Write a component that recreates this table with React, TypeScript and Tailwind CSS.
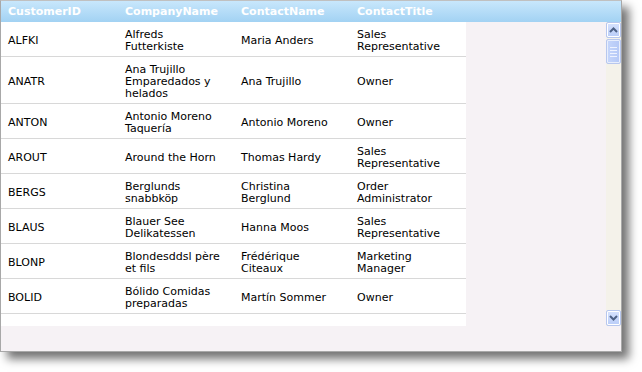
import React from "react";

const rows: [string, string, string, string][] = [
  ["ALFKI", "Alfreds Futterkiste", "Maria Anders", "Sales Representative"],
  ["ANATR", "Ana Trujillo Emparedados y helados", "Ana Trujillo", "Owner"],
  ["ANTON", "Antonio Moreno Taquería", "Antonio Moreno", "Owner"],
  ["AROUT", "Around the Horn", "Thomas Hardy", "Sales Representative"],
  ["BERGS", "Berglunds snabbköp", "Christina Berglund", "Order Administrator"],
  ["BLAUS", "Blauer See Delikatessen", "Hanna Moos", "Sales Representative"],
  ["BLONP", "Blondesddsl père et fils", "Frédérique Citeaux", "Marketing Manager"],
  ["BOLID", "Bólido Comidas preparadas", "Martín Sommer", "Owner"],
];

const headers = ["CustomerID", "CompanyName", "ContactName", "ContactTitle"];

function Chevron({ up }: { up: boolean }) {
  return (
    <svg width="9" height="6" viewBox="0 0 9 6">
      <path
        d={up ? "M1 5 L4.5 1.5 L8 5" : "M1 1 L4.5 4.5 L8 1"}
        fill="none"
        stroke="#4d6185"
        strokeWidth="2"
      />
    </svg>
  );
}

function ScrollBtn({ up }: { up: boolean }) {
  return (
    <div className="h-[16px] w-[15px] rounded-[2px] border border-[#b7c7ee] bg-gradient-to-b from-[#d6e2fd] to-[#b9cdf8] flex items-center justify-center shadow-[inset_0_0_0_1px_#ffffff]">
      <Chevron up={up} />
    </div>
  );
}

export default function App() {
  return (
    <div className="w-[642px] h-[372px] bg-white relative" style={{ fontFamily: '"DejaVu Sans", Verdana, sans-serif' }}>
      <div className="w-[622px] h-[352px] border border-[#a8a8a8] border-t-[#c0c0c0] flex flex-col bg-[#f6f2f5] shadow-[7px_7px_9px_rgba(0,0,0,0.55)]">
        <div className="h-[21px] shrink-0 flex bg-gradient-to-b from-[#c8e7fc] to-[#a2d2f3] text-white font-bold text-[11px] leading-[21px]">
          {headers.map((h, i) => (
            <div key={h} className={i === 0 ? "w-[117px] pl-[7px]" : "w-[116px] pl-[7px]"}>{h}</div>
          ))}
        </div>
        <div className="h-[304px] shrink-0 flex">
          <div className="flex-1 overflow-hidden">
            <div className="w-[465px] bg-white h-full overflow-hidden text-black text-[11px] leading-[12px]">
              {rows.map((r) => (
                <div key={r[0]} className="flex items-center min-h-[35px] pt-[7px] pb-[3px] border-b border-[#d8d8d8]">
                  {r.map((c, i) => (
                    <div key={i} className={i === 0 ? "w-[117px] pl-[7px] pr-[14px]" : "w-[116px] pl-[7px] pr-[14px]"}>{c}</div>
                  ))}
                </div>
              ))}
            </div>
          </div>
          <div className="w-[15px] bg-[#f4f2ea] flex flex-col justify-between pb-0">
            <div className="flex flex-col gap-[1px]">
              <ScrollBtn up={true} />
              <div className="h-[25px] w-[15px] rounded-[2px] border border-[#b7c7ee] bg-gradient-to-r from-[#c6d6fb] to-[#b4c8f6] flex flex-col items-center justify-center gap-[2px] shadow-[inset_0_0_0_1px_#e8eefc]">
                <div className="w-[7px] h-[1px] bg-[#eef3ff]" />
                <div className="w-[7px] h-[1px] bg-[#eef3ff]" />
                <div className="w-[7px] h-[1px] bg-[#eef3ff]" />
                <div className="w-[7px] h-[1px] bg-[#eef3ff]" />
              </div>
            </div>
            <ScrollBtn up={false} />
          </div>
        </div>
        <div className="flex-1" />
      </div>
    </div>
  );
}
